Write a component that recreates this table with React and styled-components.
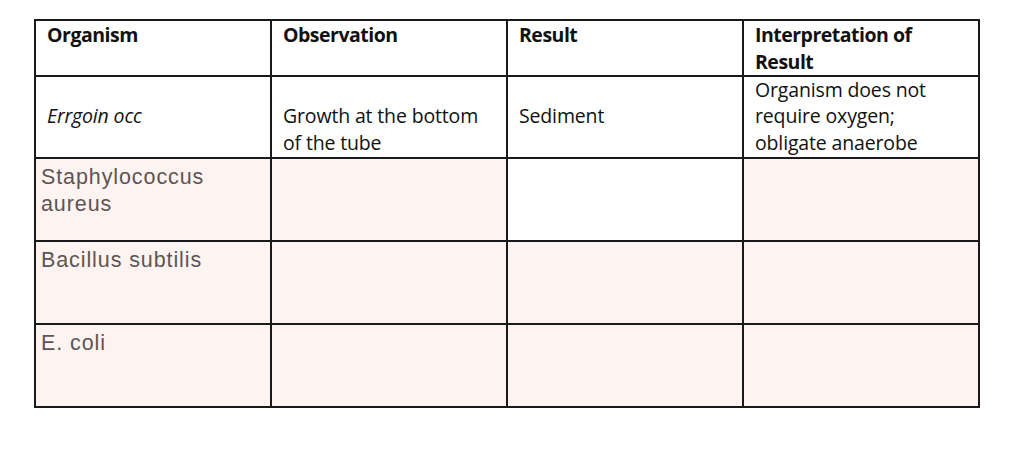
import React from "react";
import styled, { createGlobalStyle } from "styled-components";

const GlobalStyle = createGlobalStyle`
	html, body {
		margin: 0;
		padding: 0;
		background: #ffffff;
	}
`;

// which columns stay white (only the Result cell of the first empty row)
const rows = [
	{ organism: "Staphylococcus aureus", white: [false, false, true, false] },
	{ organism: "Bacillus subtilis", white: [false, false, false, false] },
	{ organism: "E. coli", white: [false, false, false, false] },
];

const App = () => {
	return (
		<Page>
			<GlobalStyle />
			<Table>
				<tbody>
					<HeadRow>
						<HeadCell>Organism</HeadCell>
						<HeadCell>Observation</HeadCell>
						<HeadCell>Result</HeadCell>
						<HeadCell>Interpretation of Result</HeadCell>
					</HeadRow>
					<SampleRow>
						<SampleCell $skipLine>
							<i>Errgoin occ</i>
						</SampleCell>
						<SampleCell $skipLine>Growth at the bottom of the tube</SampleCell>
						<SampleCell $skipLine>Sediment</SampleCell>
						<SampleCell>Organism does not require oxygen; obligate anaerobe</SampleCell>
					</SampleRow>
					{rows.map((row) => (
						<EntryRow key={row.organism}>
							<EntryCell>{row.organism}</EntryCell>
							<EntryCell $white={row.white[1]} />
							<EntryCell $white={row.white[2]} />
							<EntryCell $white={row.white[3]} />
						</EntryRow>
					))}
				</tbody>
			</Table>
		</Page>
	);
};

export default App;

const Page = styled.div`
	width: 1024px;
	height: 467px;
	padding: 19px 0 0 34px;
	box-sizing: border-box;
`;

const Table = styled.table`
	width: 946px;
	table-layout: fixed;
	border-collapse: collapse;
	font-family: "Open Sans", "Liberation Sans", sans-serif;
	color: #111;
`;

const HeadRow = styled.tr`
	height: 56px;
`;

const HeadCell = styled.td`
	border: 2px solid #1a1a1a;
	vertical-align: top;
	padding: 1px 14px 0 11px;
	font-size: 19.5px;
	font-weight: 700;
	line-height: 26.5px;
	letter-spacing: -0.5px;
`;

const SampleRow = styled.tr`
	height: 82px;
`;

const SampleCell = styled.td`
	border: 2px solid #1a1a1a;
	vertical-align: top;
	padding: ${(p) => (p.$skipLine ? "26.3px" : "0")} 14px 0 11px;
	font-size: 19.5px;
	line-height: 26.3px;
	letter-spacing: -0.15px;
`;

const EntryRow = styled.tr`
	height: 83px;
`;

const EntryCell = styled.td`
	border: 2px solid #1a1a1a;
	vertical-align: top;
	padding: 5px 8px 0 5px;
	background: ${(p) => (p.$white ? "#ffffff" : "#fdf3f1")};
	font-family: "Liberation Sans", Arial, sans-serif;
	font-size: 21.5px;
	line-height: 27px;
	letter-spacing: 0.9px;
	color: #5d5553;
`;
